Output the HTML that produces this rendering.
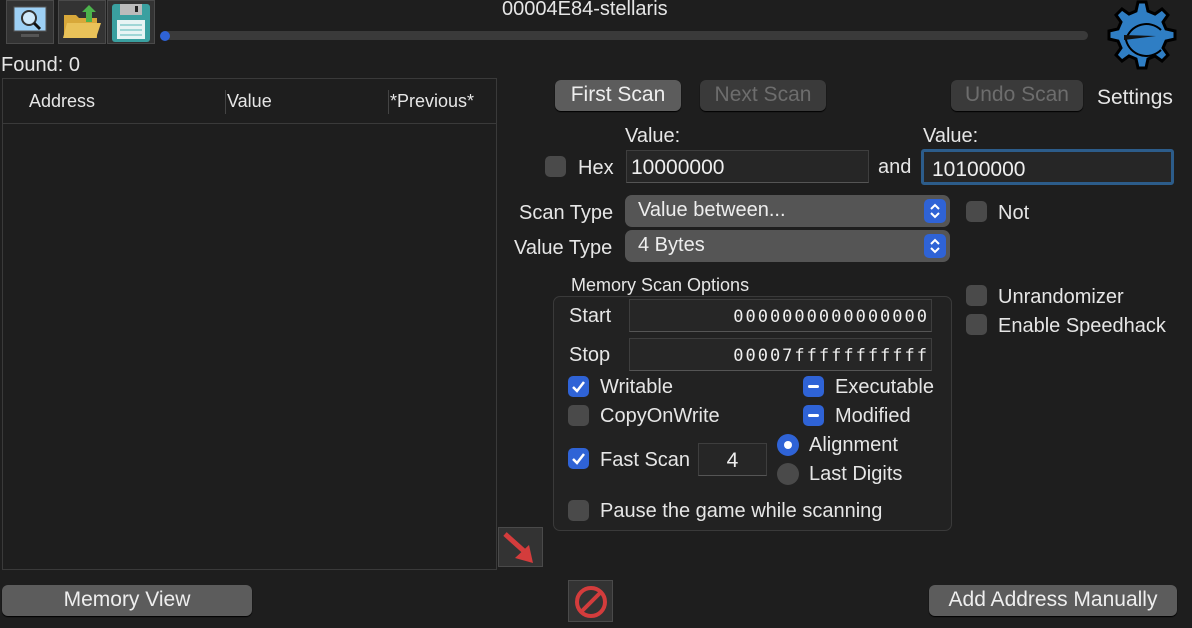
<!DOCTYPE html><html><head><style>
body{margin:0;width:1192px;height:624px;background:#1e1e1e;overflow:hidden;font-family:"Liberation Sans",sans-serif;color:#e6e6e6;position:relative}
.a{position:absolute;white-space:nowrap}
.t{font-size:20px}
.btn{position:absolute;background:#5c5c5c;border-radius:6px;color:#eee;font-size:21px;text-align:center;box-shadow:0 1px 1px #000}
.dis{background:#3a3a3a;color:#6d6d6d}
.inp{position:absolute;background:#262626;border:1px solid #3e3e3e;border-bottom-color:#555;color:#eee;font-size:21px;box-sizing:border-box}
.cb{position:absolute;width:21px;height:21px;border-radius:5px;background:#4a4a4a;box-sizing:border-box}
.cbon{background:#2f63d6}
.sel{position:absolute;background:#555;border-radius:7px;font-size:20px;color:#eee;box-sizing:border-box;padding-left:13px}
.sel i{position:absolute;right:4px;top:4px;width:22px;height:24px;background:#2f63d6;border-radius:5px}
.tb{position:absolute;top:0;width:48px;height:44px;background:#333;border:1px solid #4a4a4a;box-sizing:border-box}
.mono{font-family:'DejaVu Sans Mono',monospace;font-size:17px;letter-spacing:2px}
</style></head><body>
<div class="tb" style="left:6px"><svg width="48" height="44"><rect x="7" y="6" width="32" height="24" fill="#9dd0f5" stroke="#555"/><circle cx="22" cy="17" r="7" fill="#cfe9fb" stroke="#333" stroke-width="2"/><line x1="27" y1="22" x2="33" y2="28" stroke="#111" stroke-width="3"/><rect x="14" y="33" width="18" height="3" fill="#555"/></svg></div>
<div class="tb" style="left:58px"><svg width="48" height="44"><path d="M5 14h12l3 3h18v20H5z" fill="#d8a83a"/><path d="M8 22h34l-5 15H4z" fill="#e9c259"/><path d="M30 4l7 7h-4v10h-6V11h-4z" fill="#4cb34c"/></svg></div>
<div class="tb" style="left:107px"><svg width="48" height="44"><rect x="4" y="3" width="38" height="38" rx="3" fill="#3aa0a0"/><rect x="12" y="3" width="22" height="11" fill="#bbb"/><rect x="27" y="5" width="3" height="6" fill="#222"/><rect x="9" y="19" width="28" height="19" fill="#e8f4f4"/><path d="M12 24h22M12 29h22M12 34h22" stroke="#8cc" stroke-width="1.5"/></svg></div>
<div class="a" style="left:502px;top:-2px;font-size:20px">00004E84-stellaris</div>
<div class="a" style="left:162px;top:31px;width:926px;height:9px;background:#3a3a3a;border-radius:5px"></div>
<div class="a" style="left:160px;top:31px;width:10px;height:10px;background:#2f63d6;border-radius:50%"></div>
<svg class="a" style="left:1094px;top:0" width="98" height="80" viewBox="0 0 98 80"><path d="M44 2h8l2 9 7 3 7-5 6 6-5 7 3 7 9 2v8l-9 2-3 7 5 7-6 6-7-5-7 3-2 9h-8l-2-9-7-3-7 5-6-6 5-7-3-7-9-2v-8l9-2 3-7-5-7 6-6 7 5 7-3z" fill="#2f7ec4" stroke="#000" stroke-width="3"/><path d="M66 26a22 22 0 1 0 0 28l-9-3a14 14 0 1 1 0-22z" fill="#1e1e1e" opacity="0"/><path d="M67 30a21 21 0 0 0-35 10a21 21 0 0 0 35 10" fill="none" stroke="#000" stroke-width="2"/><path d="M30 40l32-4-32-1z" fill="#111"/></svg>
<div class="a t" style="left:1px;top:54px">Found: 0</div>
<div class="a" style="left:2px;top:78px;width:495px;height:492px;border:1px solid #3a3a3a;box-sizing:border-box"></div>
<div class="a" style="left:3px;top:123px;width:494px;height:1px;background:#3a3a3a"></div>
<div class="a" style="left:29px;top:91px;font-size:18px">Address</div>
<div class="a" style="left:225px;top:90px;width:1px;height:24px;background:#444"></div>
<div class="a" style="left:227px;top:91px;font-size:18px">Value</div>
<div class="a" style="left:388px;top:90px;width:1px;height:24px;background:#444"></div>
<div class="a" style="left:390px;top:91px;font-size:18px">*Previous*</div>
<div class="btn" style="left:555px;top:80px;width:126px;height:31px;line-height:30px">First Scan</div>
<div class="btn dis" style="left:700px;top:80px;width:126px;height:31px;line-height:30px">Next Scan</div>
<div class="btn dis" style="left:951px;top:80px;width:132px;height:31px;line-height:30px">Undo Scan</div>
<div class="a" style="left:1097px;top:86px;font-size:21px">Settings</div>
<div class="a t" style="left:625px;top:125px">Value:</div>
<div class="a t" style="left:923px;top:125px">Value:</div>
<div class="cb" style="left:545px;top:156px"></div>
<div class="a t" style="left:578px;top:157px">Hex</div>
<div class="inp" style="left:626px;top:150px;width:243px;height:33px;padding:5px 4px">10000000</div>
<div class="a t" style="left:878px;top:156px">and</div>
<div class="inp" style="left:921px;top:149px;width:253px;height:36px;padding:6px 8px;border:3px solid #2c5c8a;border-radius:3px">10100000</div>
<div class="a t" style="left:519px;top:202px">Scan Type</div>
<div class="sel" style="left:625px;top:195px;width:325px;height:32px;line-height:31px">Value between...<i><svg width="22" height="24"><path d="M7 10l4-4 4 4M7 14l4 4 4-4" stroke="#fff" stroke-width="2" fill="none"/></svg></i></div>
<div class="a t" style="left:514px;top:237px">Value Type</div>
<div class="sel" style="left:625px;top:230px;width:325px;height:32px;line-height:31px">4 Bytes<i><svg width="22" height="24"><path d="M7 10l4-4 4 4M7 14l4 4 4-4" stroke="#fff" stroke-width="2" fill="none"/></svg></i></div>
<div class="cb" style="left:966px;top:201px"></div><div class="a t" style="left:998px;top:202px">Not</div>
<div class="a" style="left:571px;top:275px;font-size:18px">Memory Scan Options</div>
<div class="a" style="left:553px;top:296px;width:399px;height:235px;border:1px solid #3a3a3a;border-radius:7px;background:#222;box-sizing:border-box"></div>
<div class="a t" style="left:569px;top:305px">Start</div>
<div class="inp mono" style="left:629px;top:299px;width:303px;height:33px;text-align:right;padding:7px 2px">0000000000000000</div>
<div class="a t" style="left:569px;top:344px">Stop</div>
<div class="inp mono" style="left:629px;top:338px;width:303px;height:33px;text-align:right;padding:7px 2px">00007fffffffffff</div>
<div class="cb cbon" style="left:568px;top:376px"><svg width="21" height="21"><path d="M5 11l4 4 7-9" stroke="#fff" stroke-width="2.5" fill="none"/></svg></div><div class="a t" style="left:600px;top:376px">Writable</div>
<div class="cb cbon" style="left:803px;top:376px"><div style="position:absolute;left:5px;top:9px;width:11px;height:3px;background:#fff;border-radius:2px"></div></div><div class="a t" style="left:835px;top:376px">Executable</div>
<div class="cb" style="left:568px;top:405px"></div><div class="a t" style="left:600px;top:405px">CopyOnWrite</div>
<div class="cb cbon" style="left:803px;top:405px"><div style="position:absolute;left:5px;top:9px;width:11px;height:3px;background:#fff;border-radius:2px"></div></div><div class="a t" style="left:835px;top:405px">Modified</div>
<div class="cb cbon" style="left:568px;top:448px"><svg width="21" height="21"><path d="M5 11l4 4 7-9" stroke="#fff" stroke-width="2.5" fill="none"/></svg></div><div class="a t" style="left:600px;top:449px">Fast Scan</div>
<div class="inp" style="left:698px;top:443px;width:69px;height:33px;text-align:center;padding:5px">4</div>
<div class="a" style="left:777px;top:434px;width:22px;height:22px;border-radius:50%;background:#2f63d6"><div style="margin:7px;width:8px;height:8px;border-radius:50%;background:#fff"></div></div><div class="a t" style="left:809px;top:434px">Alignment</div>
<div class="a" style="left:777px;top:463px;width:22px;height:22px;border-radius:50%;background:#4a4a4a"></div><div class="a t" style="left:809px;top:463px">Last Digits</div>
<div class="cb" style="left:568px;top:500px"></div><div class="a t" style="left:600px;top:500px">Pause the game while scanning</div>
<div class="cb" style="left:966px;top:285px"></div><div class="a t" style="left:998px;top:286px">Unrandomizer</div>
<div class="cb" style="left:966px;top:314px"></div><div class="a t" style="left:998px;top:315px">Enable Speedhack</div>
<div class="a" style="left:498px;top:527px;width:45px;height:40px;background:#333;border:1px solid #4a4a4a;box-sizing:border-box"><svg width="45" height="40"><path d="M6 6l20 18" stroke="#d43c3c" stroke-width="5"/><path d="M34 35L16 30 30 17z" fill="#d43c3c"/></svg></div>
<div class="a" style="left:568px;top:580px;width:45px;height:42px;background:#333;border:1px solid #4a4a4a;box-sizing:border-box"><svg width="45" height="42"><circle cx="22" cy="21" r="14" stroke="#d43c3c" stroke-width="4" fill="none"/><path d="M12 31l20-20" stroke="#d43c3c" stroke-width="4"/></svg></div>
<div class="btn" style="left:2px;top:585px;width:250px;height:31px;line-height:30px">Memory View</div>
<div class="btn" style="left:929px;top:585px;width:248px;height:31px;line-height:30px">Add Address Manually</div>
</body></html>
